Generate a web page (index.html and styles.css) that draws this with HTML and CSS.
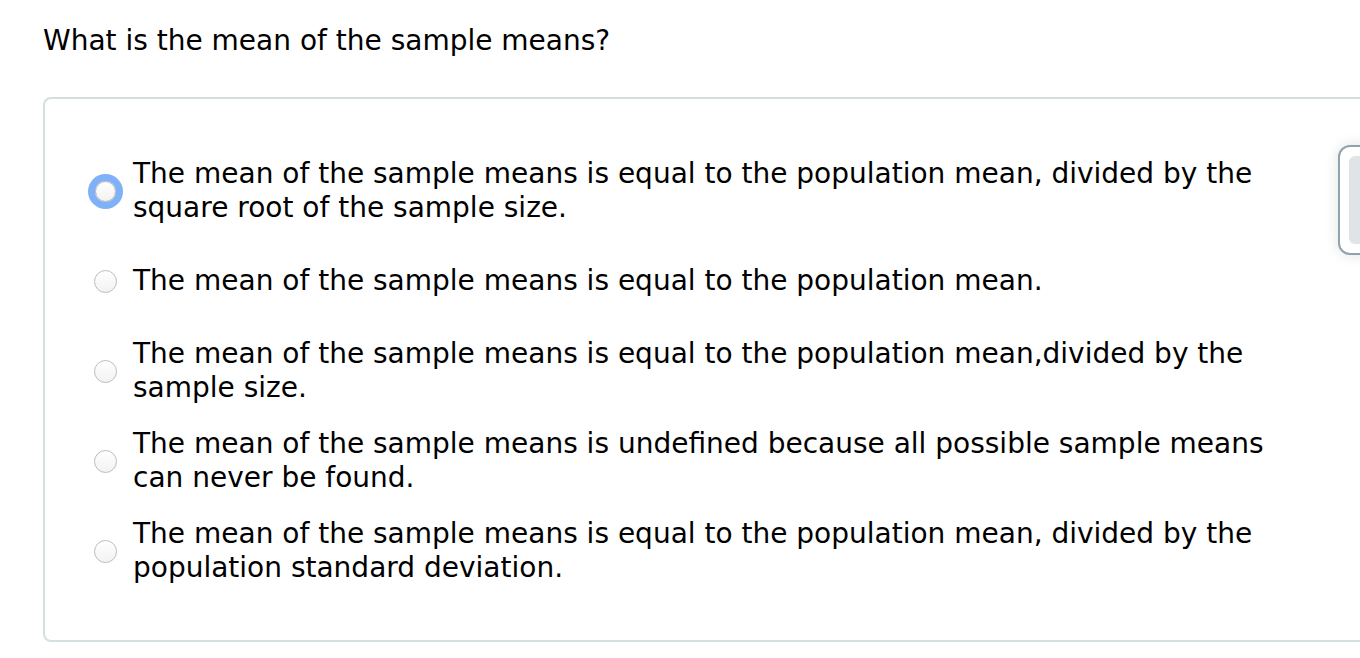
FILE: index.html
```html
<!DOCTYPE html>
<html lang="en">
<head>
    <meta charset="UTF-8">
    <meta name="viewport" content="width=device-width, initial-scale=1.0">
    <title>Question</title>
    <link rel="stylesheet" href="styles.css">
</head>
<body>
    <h1 class="question">What is the mean of the sample means?</h1>
    <div class="answers">
        <div class="choices">
            <label class="choice">
                <input type="radio" name="answer" class="radio focused">
                <span class="text">The mean of the sample means is equal to the population mean, divided by the square root of the sample size.</span>
            </label>
            <label class="choice">
                <input type="radio" name="answer" class="radio">
                <span class="text">The mean of the sample means is equal to the population mean.</span>
            </label>
            <label class="choice">
                <input type="radio" name="answer" class="radio">
                <span class="text">The mean of the sample means is equal to the population mean,divided by the sample size.</span>
            </label>
            <label class="choice">
                <input type="radio" name="answer" class="radio">
                <span class="text">The mean of the sample means is undefined because all possible sample means can never be found.</span>
            </label>
            <label class="choice">
                <input type="radio" name="answer" class="radio">
                <span class="text">The mean of the sample means is equal to the population mean, divided by the population standard deviation.</span>
            </label>
        </div>
        <div class="side-button">
            <div class="side-button-inner"></div>
        </div>
    </div>
</body>
</html>
```

FILE: styles.css
```css
html, body {
    overflow: hidden;
}
body {
    margin: 0;
    width: 1360px;
    height: 658px;
    background-color: #fff;
    color: #000;
    font-family: "DejaVu Sans", Verdana, sans-serif;
    font-size: 28px;
    line-height: 34px;
}
.question {
    margin: 24px 0 0 43px;
    font-size: 28px;
    font-weight: normal;
    line-height: 34px;
}
.answers {
    display: flex;
    align-items: flex-start;
    width: 1500px;
    margin: 39px 0 0 43px;
    padding: 46px 0 55px 49px;
    border: 2px solid #d5dee0;
    border-radius: 8px;
    box-sizing: border-box;
}
.choices {
    display: flex;
    flex-direction: column;
    gap: 22px;
    width: 1200px;
    margin-top: 12px;
    flex-shrink: 0;
}
.choice {
    display: flex;
    align-items: center;
    gap: 16px;
    min-height: 68px;
}
.text {
    width: 1150px;
}
.radio {
    appearance: none;
    -webkit-appearance: none;
    flex-shrink: 0;
    width: 23px;
    height: 23px;
    margin: 0;
    border: 1px solid #bdbdbd;
    border-radius: 50%;
    background: linear-gradient(#fff, #f2f2f2);
    box-sizing: border-box;
}
.radio.focused {
    width: 21px;
    height: 21px;
    border-color: #b0b0b0;
    box-shadow: 0 0 0 7px #7eb1f7;
    margin: 0 1px 0 1px;
}
.side-button {
    flex-shrink: 0;
    width: 120px;
    height: 110px;
    margin-left: 44px;
    padding: 9px;
    border: 2px solid #8ea4ac;
    border-radius: 12px;
    background-color: #fff;
    box-shadow: 0 0 14px rgba(0, 0, 0, 0.12);
    box-sizing: border-box;
}
.side-button-inner {
    height: 100%;
    border-radius: 6px;
    background-color: #dfe5e7;
}
```
